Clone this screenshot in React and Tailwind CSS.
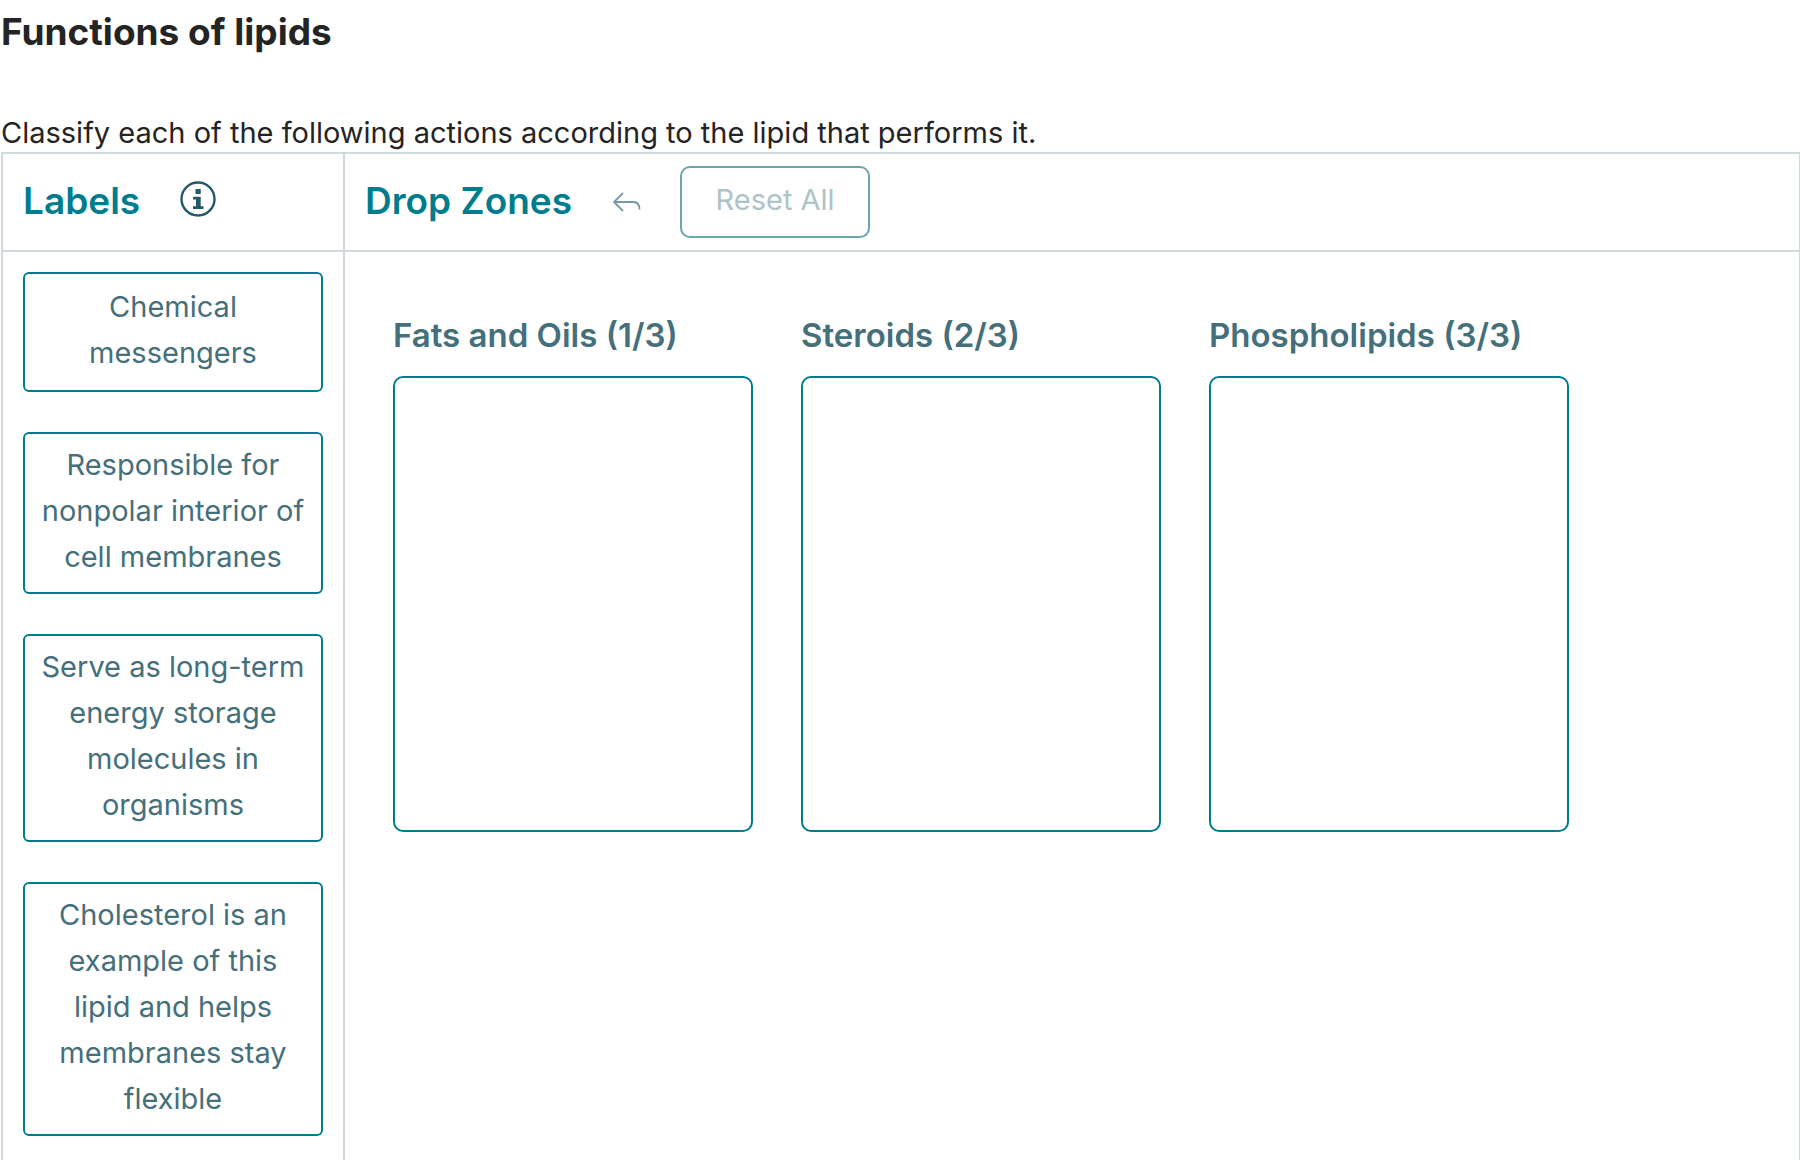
import React from 'react';

const LABELS = [
    'Chemical messengers',
    'Responsible for nonpolar interior of cell membranes',
    'Serve as long-term energy storage molecules in organisms',
    'Cholesterol is an example of this lipid and helps membranes stay flexible',
];

const ZONES = [
    { name: 'Fats and Oils', position: 1 },
    { name: 'Steroids', position: 2 },
    { name: 'Phospholipids', position: 3 },
];

const InfoIcon = () => (
    <svg width="36" height="36" viewBox="0 0 36 36" fill="none" aria-hidden="true">
        <circle cx="18" cy="18" r="16.5" stroke="#24596a" strokeWidth="2.4" />
        <path d="M15.5 8h5.2v5h-5.2zM13 15.8h7.7v9.4h2.8V28H13v-2.8h3V18.6h-3z" fill="#24596a" />
    </svg>
);

const UndoIcon = () => (
    <svg width="30" height="24" viewBox="0 0 30 24" fill="none" aria-hidden="true">
        <path d="M11 3 2 12l9 9M2 12h19.5c4 0 6 2.4 6 7.5" stroke="#7799a3" strokeWidth="1.8" />
    </svg>
);

/**
 * Draggable answer label
 */
const LabelCard = ({ text }) => (
    <button
        type="button"
        className="flex min-h-[120px] w-full cursor-grab items-center justify-center rounded-md border-2 border-[#007c8f] px-3.5 pt-2 pb-3 text-center text-[29px] leading-[46px] text-[#456f7b]"
    >
        {text}
    </button>
);

/**
 * Named target that labels are dropped into
 */
const DropZone = ({ name, position, total }) => (
    <section className="w-[360px]" aria-label={name}>
        <h3 className="text-[33px] leading-[46px] font-semibold whitespace-nowrap text-[#456f7b]">
            {name} ({position}/{total})
        </h3>
        <div className="mt-[18px] h-[456px] rounded-[10px] border-2 border-[#007c8f]" />
    </section>
);

const App = () => {
    return (
        <main className="flex min-h-screen flex-col bg-white pl-px font-['Inter','Open_Sans',sans-serif] text-[#242424]">
            <h1 className="pt-2 text-[37px] leading-[48px] font-bold">Functions of lipids</h1>
            <p className="mt-[58px] text-[29px] leading-[38px]">
                Classify each of the following actions according to the lipid that performs it.
            </p>

            <div className="grid flex-1 grid-cols-[342px_1fr] grid-rows-[98px_1fr] border-2 border-r border-b-0 border-[#d0dbdd]">
                <div className="flex items-center gap-10 border-r-2 border-b-2 border-[#d0dbdd] px-5 pb-0.5">
                    <h2 className="text-[37px] leading-[48px] font-semibold text-[#007c8f]">Labels</h2>
                    <button type="button" aria-label="Instructions" className="mb-1">
                        <InfoIcon />
                    </button>
                </div>

                <div className="flex items-center border-b-2 border-[#d0dbdd] px-5">
                    <h2 className="pb-0.5 text-[37px] leading-[48px] font-semibold text-[#007c8f]">Drop Zones</h2>
                    <button type="button" disabled aria-label="Undo" className="ml-10">
                        <UndoIcon />
                    </button>
                    <button
                        type="button"
                        disabled
                        className="ml-[38px] h-[72px] w-[190px] rounded-[10px] border-2 border-[#6ba3ae] pb-1 text-[29px] text-[#afc2c8]"
                    >
                        Reset All
                    </button>
                </div>

                <div className="flex flex-col gap-10 border-r-2 border-[#d0dbdd] p-5 pb-6">
                    {LABELS.map(text => (
                        <LabelCard key={text} text={text} />
                    ))}
                </div>

                <div className="flex flex-wrap content-start gap-12 px-12 py-[60px]">
                    {ZONES.map(zone => (
                        <DropZone key={zone.name} total={ZONES.length} {...zone} />
                    ))}
                </div>
            </div>
        </main>
    );
};

export default App;
